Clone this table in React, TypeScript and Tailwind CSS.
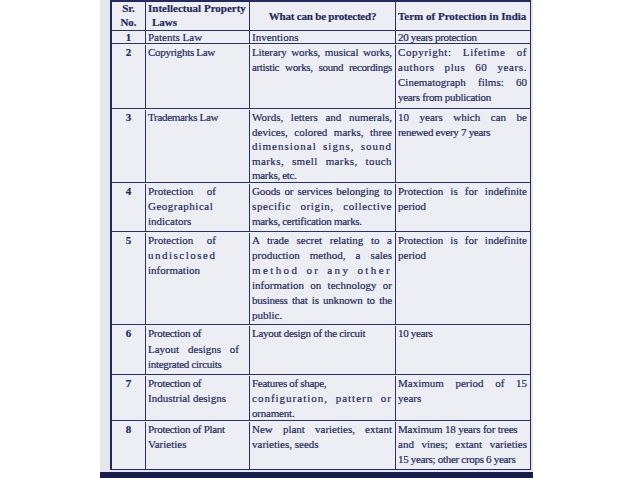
import clsx from "clsx";

type Line = { t: string; j?: boolean; c?: string };

const L = (t: string, j?: boolean, c?: string): Line => ({ t, j, c });

interface RowData {
  no: string;
  h: string; // row height + line height classes
  law: Line[];
  lawWidth?: string;
  what: Line[];
  term: Line[];
}

const rows: RowData[] = [
  {
    no: "1",
    h: "h-[13px] leading-[13px]",
    law: [L("Patents Law")],
    what: [L("Inventions")],
    term: [L("20 years protection", false, "tracking-[-0.3px]")],
  },
  {
    no: "2",
    h: "h-[65px] pt-[1px]",
    law: [L("Copyrights Law", false, "tracking-[-0.3px]")],
    what: [
      L("Literary works, musical works,", true, "tracking-[-0.1px]"),
      L("artistic works, sound recordings", true, "tracking-[-0.35px]"),
    ],
    term: [
      L("Copyright: Lifetime of", true, "tracking-[0.6px]"),
      L("authors plus 60 years.", true, "tracking-[0.6px]"),
      L("Cinematograph films: 60", true),
      L("years from publication", false, "tracking-[-0.3px]"),
    ],
  },
  {
    no: "3",
    h: "h-[74px] pt-[1px] leading-[14.5px]",
    law: [L("Trademarks Law", false, "tracking-[-0.3px]")],
    what: [
      L("Words, letters and numerals,", true),
      L("devices, colored marks, three", true),
      L("dimensional signs, sound", true, "tracking-[1px]"),
      L("marks, smell marks, touch", true, "tracking-[0.4px]"),
      L("marks, etc.", false, "tracking-[-0.3px]"),
    ],
    term: [
      L("10 years which can be", true),
      L("renewed every 7 years", false, "tracking-[-0.3px]"),
    ],
  },
  {
    no: "4",
    h: "h-[49px] pt-[1px]",
    lawWidth: "w-[68px]",
    law: [
      L("Protection of", true),
      L("Geographical", false, "tracking-[0.5px]"),
      L("indicators"),
    ],
    what: [
      L("Goods or services belonging to", true, "tracking-[-0.1px]"),
      L("specific origin, collective", true, "tracking-[0.6px]"),
      L("marks, certification marks.", false, "tracking-[-0.3px]"),
    ],
    term: [L("Protection is for indefinite", true), L("period")],
  },
  {
    no: "5",
    h: "h-[93px] pt-[1px]",
    lawWidth: "w-[68px]",
    law: [
      L("Protection of", true),
      L("undisclosed", true, "tracking-[1.5px]"),
      L("information"),
    ],
    what: [
      L("A trade secret relating to a", true),
      L("production method, a sales", true),
      L("method or any other", true, "tracking-[2.4px]"),
      L("information on technology or", true),
      L("business that is unknown to the", true, "tracking-[-0.2px]"),
      L("public."),
    ],
    term: [L("Protection is for indefinite", true), L("period")],
  },
  {
    no: "6",
    h: "h-[50px] pt-[1px]",
    lawWidth: "w-[91px]",
    law: [
      L("Protection of", false, "tracking-[-0.3px]"),
      L("Layout designs of", true, "leading-[16px]"),
      L("integrated circuits", false, "tracking-[-0.3px] leading-[15px]"),
    ],
    what: [L("Layout design of the circuit", false, "tracking-[-0.3px]")],
    term: [L("10 years", false, "tracking-[-0.3px]")],
  },
  {
    no: "7",
    h: "h-[46px] pt-[1px]",
    law: [
      L("Protection of", false, "tracking-[-0.3px]"),
      L("Industrial designs"),
    ],
    what: [
      L("Features of shape,", false, "tracking-[-0.3px]"),
      L("configuration, pattern or", true, "tracking-[1px]"),
      L("ornament.", false, "tracking-[-0.2px]"),
    ],
    term: [L("Maximum period of 15", true), L("years")],
  },
  {
    no: "8",
    h: "h-[48px] pt-[1px]",
    law: [L("Protection of Plant", false, "tracking-[-0.3px]"), L("Varieties")],
    what: [L("New plant varieties, extant", true), L("varieties, seeds")],
    term: [
      L("Maximum 18 years for trees", false, "tracking-[-0.2px]"),
      L("and vines; extant varieties", true),
      L("15 years; other crops 6 years", false, "tracking-[-0.3px]"),
    ],
  },
];

function Lines({ lines, width }: { lines: Line[]; width?: string }) {
  return (
    <div className={width}>
      {lines.map((l, i) => (
        <div
          key={i}
          className={clsx(
            "whitespace-nowrap",
            l.j && "text-justify [text-align-last:justify]",
            l.c
          )}
        >
          {l.t}
        </div>
      ))}
    </div>
  );
}

export default function App() {
  return (
    <div className="w-[638px] h-[478px] bg-white overflow-hidden relative font-['Liberation_Serif',serif] text-[11px] leading-[15px] text-[#1e2a5e] [-webkit-text-stroke:0.2px_#1e2a5e]">
      <div className="ml-[100px] w-[433px] flex flex-col">
        {/* table with light strip on its left */}
        <div className="h-[472px] bg-[#e6e7ec] pl-[10px] flex flex-col">
          <div className="w-[421px] bg-[#edeef3] border-l-2 border-r-[1.5px] border-t-2 border-b-[1.5px] border-[#222a60]">
            {/* header */}
            <div className="flex h-[29px] border-b border-[#2a3166] font-bold leading-[14px]">
              <div className="w-[34px] border-r border-[#2a3166] flex flex-col items-center -mt-[1px]">
                <div>Sr.</div>
                <div>No.</div>
              </div>
              <div className="w-[104px] border-r border-[#2a3166] pl-[2px] -mt-[1px]">
                <div>Intellectual Property</div>
                <div className="pl-[4px]">Laws</div>
              </div>
              <div className="w-[146px] border-r border-[#2a3166] flex items-center justify-center tracking-[-0.2px]">
                What can be protected?
              </div>
              <div className="flex-1 flex items-center pl-[2px]">
                Term of Protection in India
              </div>
            </div>

            {rows.map((r, i) => (
              <div
                key={r.no}
                className={clsx(
                  "flex",
                  r.h,
                  i < rows.length - 1 && "border-b border-[#2a3166]"
                )}
              >
                <div className="w-[34px] border-r border-[#2a3166] text-center font-bold">
                  {r.no}
                </div>
                <div className="w-[104px] border-r border-[#2a3166] pl-[2px] pr-[2px]">
                  <Lines lines={r.law} width={r.lawWidth} />
                </div>
                <div className="w-[146px] border-r border-[#2a3166] pl-[2px] pr-[3px]">
                  <Lines lines={r.what} />
                </div>
                <div className="flex-1 pl-[2px] pr-[3px]">
                  <Lines lines={r.term} />
                </div>
              </div>
            ))}
          </div>
        </div>
        <div className="h-[6px] bg-[#171c4a]" />
      </div>
    </div>
  );
}
